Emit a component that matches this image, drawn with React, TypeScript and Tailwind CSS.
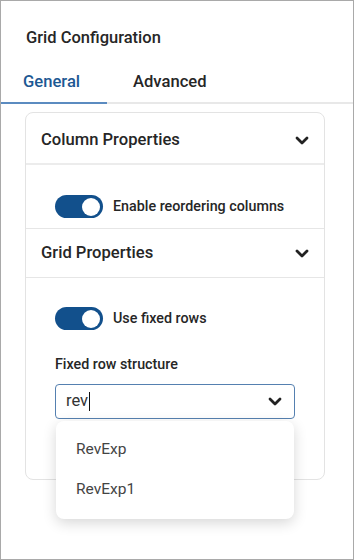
import React from 'react';

const Chevron = ({ className = '' }: { className?: string }) => (
  <svg width="14" height="9" viewBox="0 0 14 9" className={className}>
    <path d="M2 2l5 5 5-5" fill="none" stroke="#222" strokeWidth="2.8" strokeLinecap="round" strokeLinejoin="round" />
  </svg>
);

const Toggle = () => (
  <div className="w-[48px] h-[23px] rounded-full bg-[#12508c] flex items-center justify-end pr-[3px] shrink-0">
    <div className="w-[18px] h-[18px] rounded-full bg-white" />
  </div>
);

export default function App() {
  return (
    <div
      className="w-[354px] h-[560px] border border-[#a9a9a9] bg-white text-[#262626] relative"
      style={{ fontFamily: 'Roboto, "Liberation Sans", sans-serif' }}
    >
      {/* Title */}
      <div className="pl-[25px] pt-[27px] text-[16.5px] leading-[20px] font-medium">Grid Configuration</div>

      {/* Tabs */}
      <div className="mt-[12px] flex border-b-2 border-[#e8e8e8]">
        <div className="w-[106px] h-[44px] -mb-[2px] border-b-2 border-[#5b8bc0] pl-[22px] pt-[2px] flex items-center text-[16.6px] font-medium text-[#1d5893]">
          General
        </div>
        <div className="h-[42px] pl-[26px] pt-[2px] flex items-center text-[16.6px] font-medium text-[#262626]">Advanced</div>
      </div>

      {/* Card */}
      <div className="ml-[24px] mt-[8px] w-[300px] rounded-[8px] border border-[#e3e3e3]">
        <div className="h-[52px] pt-[4px] pl-[15px] pr-[15px] flex items-center justify-between border-b-2 border-[#ececec]">
          <span className="text-[16.6px] font-medium">Column Properties</span>
          <Chevron />
        </div>
        <div className="pt-[30px] pb-[10px] pl-[29px] flex items-center gap-[10px] border-b border-[#e6e6e6]">
          <Toggle />
          <span className="text-[14.3px] font-medium">Enable reordering columns</span>
        </div>
        <div className="h-[49px] pl-[15px] pr-[15px] flex items-center justify-between border-b border-[#e6e6e6]">
          <span className="text-[16.6px] font-medium">Grid Properties</span>
          <Chevron />
        </div>
        <div className="pt-[29px] pb-[60px] pl-[29px]">
          <div className="flex items-center gap-[10px]">
            <Toggle />
            <span className="text-[14.3px] font-medium">Use fixed rows</span>
          </div>
          <div className="mt-[24px] text-[14.3px] leading-[20px] font-medium">Fixed row structure</div>
          <div className="relative mt-[10px] w-[240px] h-[35px] rounded-[4px] border border-[#5580b0] flex items-center justify-between pl-[10px] pr-[12px]">
            <span className="text-[16.5px] text-[#333] flex items-center">
              rev<span className="inline-block w-[1.5px] h-[19px] bg-[#111] ml-[0.5px]" />
            </span>
            <Chevron />
            {/* Dropdown */}
            <div className="absolute left-0 top-[36px] w-[238px] rounded-[8px] bg-white shadow-[0_4px_14px_rgba(0,0,0,0.16)] py-[9px] z-10">
              <div className="h-[40px] pl-[20px] flex items-center text-[15.5px] text-[#444]">RevExp</div>
              <div className="h-[40px] pl-[20px] flex items-center text-[15.5px] text-[#444]">RevExp1</div>
            </div>
          </div>
        </div>
      </div>
    </div>
  );
}
